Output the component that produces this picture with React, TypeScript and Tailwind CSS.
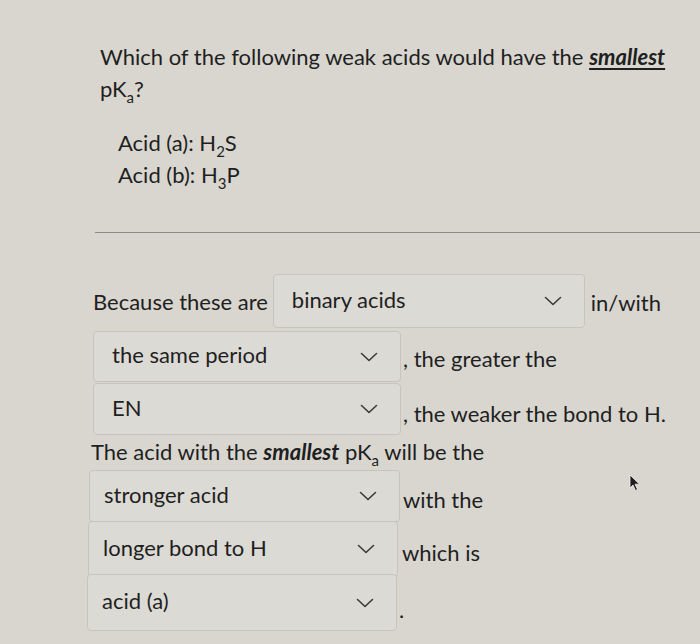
import React from "react";

function Chevron() {
  return (
    <svg width="18" height="10" viewBox="0 0 18 10" fill="none" className="shrink-0">
      <path d="M1.5 1.5 L9 8.5 L16.5 1.5" stroke="#3a3a3a" strokeWidth="1.6" strokeLinecap="round" strokeLinejoin="round" />
    </svg>
  );
}

function Sub({ children }: { children: React.ReactNode }) {
  return <span className="relative top-[6px] text-[15px] leading-none">{children}</span>;
}

function Select({ label, w, h = "h-[52px]", pad = "pl-[18px]" }: { label: string; w: string; h?: string; pad?: string }) {
  return (
    <div className={`${w} ${h} ${pad} pr-[22px] flex items-center justify-between rounded-[4px] border border-[#c6c4bd] bg-[#dcdad4] shrink-0`}>
      <span className="-mt-[4px]">{label}</span>
      <Chevron />
    </div>
  );
}

function Pointer() {
  return (
    <svg width="14" height="18" viewBox="0 0 14 18" className="absolute left-[628px] top-[474px]">
      <path d="M2 1 L2 14 L5 11 L7.5 16.5 L9.5 15.5 L7 10.2 L11.5 10.2 Z" fill="#1e1e1e" stroke="#efefef" strokeWidth="0.8" strokeLinejoin="round" />
    </svg>
  );
}

export default function App() {
  return (
    <div className="relative w-[700px] h-[644px] overflow-hidden bg-[#d8d6cf] text-[#1f1f1f] text-[22px] font-['Lato','Liberation_Sans',sans-serif]">
      <div className="pl-[100px] pt-[41px]">
        <p className="leading-[32px] w-[590px]">
          Which of the following weak acids would have the{" "}
          <span className="font-bold italic underline underline-offset-[3px] decoration-[2px]">smallest</span>{" "}
          pK<Sub>a</Sub>?
        </p>
        <div className="mt-[22px] pl-[18px] leading-[32px]">
          <div>
            Acid (a): H<Sub>2</Sub>S
          </div>
          <div>
            Acid (b): H<Sub>3</Sub>P
          </div>
        </div>
      </div>

      <div className="ml-[95px] mt-[41px] h-px bg-[#8e8c86]" />

      <div className="pl-[93px] pt-[41px]">
        <div className="flex items-center">
          <span className="mr-[5px]">Because these are</span>
          <Select label="binary acids" w="w-[312px]" h="h-[54px]" />
          <span className="ml-[6px] mt-[2px]">in/with</span>
        </div>
        <div className="flex items-center mt-[3px]">
          <Select label="the same period" w="w-[308px]" h="h-[51px]" />
          <span className="ml-[2px] mt-[4px]">, the greater the</span>
        </div>
        <div className="flex items-center mt-[1px]">
          <Select label="EN" w="w-[308px]" />
          <span className="ml-[2px] mt-[8px]">, the weaker the bond to H.</span>
        </div>
        <div className="-ml-[2px] mt-[2px] leading-[30px]">
          The acid with the <span className="font-bold italic">smallest</span> pK<Sub>a</Sub> will be the
        </div>
        <div className="-ml-[4px] mt-[3px] flex items-center">
          <Select label="stronger acid" w="w-[311px]" pad="pl-[14px]" />
          <span className="ml-[3px] mt-[6px]">with the</span>
        </div>
        <div className="-ml-[5px] mt-[-1px] flex items-center">
          <Select label="longer bond to H" w="w-[310px]" h="h-[56px]" pad="pl-[14px]" />
          <span className="ml-[4px] mt-[6px]">which is</span>
        </div>
        <div className="-ml-[6px] mt-[-3px] flex items-center">
          <Select label="acid (a)" w="w-[310px]" h="h-[57px]" pad="pl-[14px]" />
          <span className="ml-[2px] mt-[14px]">.</span>
        </div>
      </div>

      <Pointer />
    </div>
  );
}
